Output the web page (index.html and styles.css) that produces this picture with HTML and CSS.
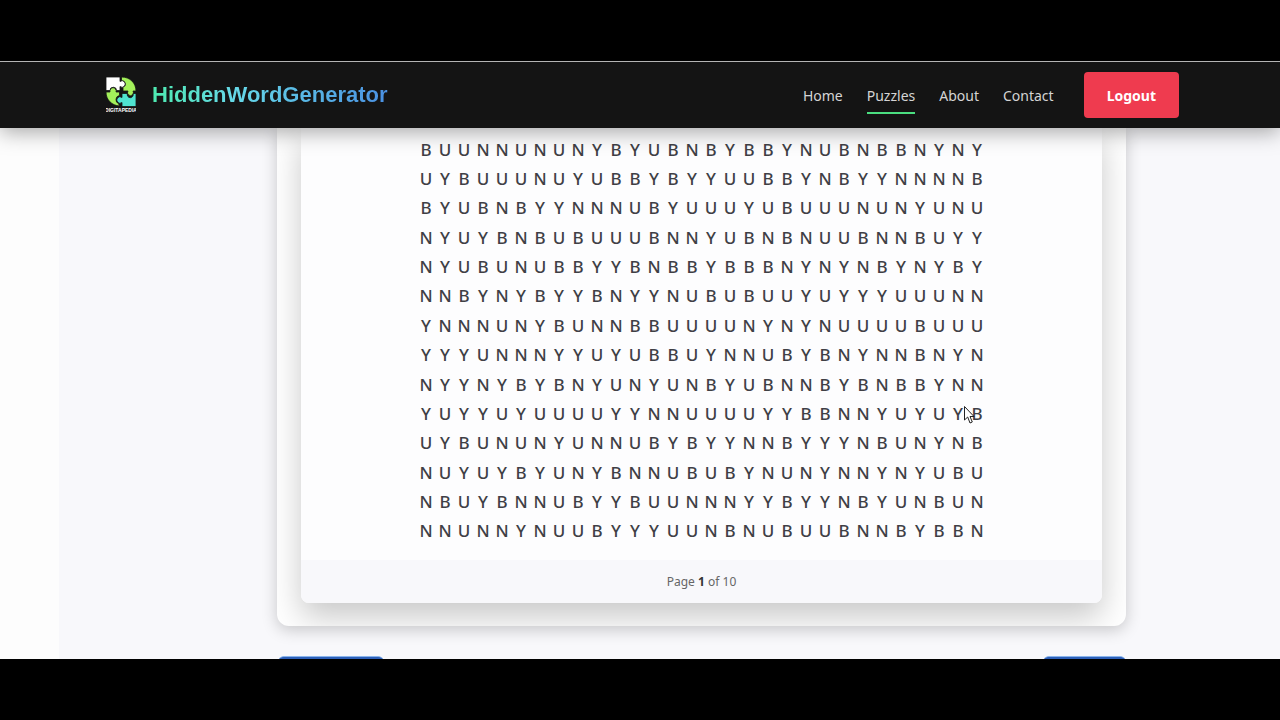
FILE: index.html
```html
<!DOCTYPE html>
<html lang="en">
<head>
  <meta charset="UTF-8">
  <meta name="viewport" content="width=device-width, initial-scale=1.0">
  <title>HiddenWordGenerator</title>
  <link rel="stylesheet" href="styles.css">
</head>
<body>
  <div class="screen">
    <!-- Navbar -->
    <header class="navbar">
      <a href="#" class="brand">
        <svg class="brand-logo" viewBox="0 0 30 36" aria-hidden="true">
          <g stroke="#141414" stroke-width=".8">
            <path fill="#a3f05a" d="M15.500 0C24 0 30 6 30 14H27A3 3 0 1 1 22 14H17V10A3 3 0 1 0 15.500 4Z"/>
            <path fill="#4fe3cf" d="M16 16.500H21.500A3 3 0 1 0 27 16.500H30V29.500H16V25.500A3.200 3.200 0 1 1 16 20.500Z"/>
            <path fill="#a3f05a" d="M0 15H4A3.200 3.200 0 1 1 10 15H13.500V18.500A4.200 4.200 0 0 0 12.500 26.500L13.500 29C6 28.500 0 23 0 15Z"/>
            <path fill="#fff" d="M0 0H14V4.500A3.200 3.200 0 1 1 14 9.500V13.500H10.500A3.200 3.200 0 0 0 4 13.500H0Z"/>
          </g>
          <text x="15" y="34.500" text-anchor="middle" class="logo-text">DIGITAPEDIA</text>
        </svg>
        <span class="brand-name">HiddenWordGenerator</span>
      </a>
      <nav class="nav-links">
        <a href="#">Home</a>
        <a href="#" class="active">Puzzles</a>
        <a href="#">About</a>
        <a href="#">Contact</a>
        <button type="button" class="logout">Logout</button>
      </nav>
    </header>

    <div class="page">
      <aside class="side-panel"></aside>
      <main class="content">
        <div class="viewer">
          <section class="puzzle">
            <div class="board">
              <div class="letters" id="letters">
                <svg class="pointer" viewBox="0 0 12 18" aria-hidden="true">
                  <path fill="#fff" stroke="#222" d="M.5.500V14L3.700 11 6 17 8.300 16 6 10.500H10Z"/>
                </svg>
              </div>
            </div>
            <p class="page-info">Page <strong>1</strong> of 10</p>
          </section>
        </div>
        <div class="pager">
          <button type="button" class="pager-btn previous" aria-label="Previous page"></button>
          <button type="button" class="pager-btn" aria-label="Next page"></button>
        </div>
      </main>
    </div>
  </div>

  <script>
    const rows = [
      "BUUNNUNUNYBYUBNBYBBYNUBNBBNYNY",
      "UYBUUUNUYUBBYBYYUUBBYNBYYNNNNB",
      "BYUBNBYYNNNUBYUUUYUBUUUNUNYUNU",
      "NYUYBNBUBUUUBNNYUBNBNUUBNNBUYY",
      "NYUBUNUBBYYBNBBYBBBNYNYNBYNYBY",
      "NNBYNYBYYBNYYNUBUBUUYUYYYUUUNN",
      "YNNNUNYBUNNBBUUUUNYNYNUUUUBUUU",
      "YYYUNNNYYUYUBBUYNNUBYBNYNNBNYN",
      "NYYNYBYBNYUNYUNBYUBNNBYBNBBYNN",
      "YUYYUYUUUUYYNNUUUUYYBBNNYUYUYB",
      "UYBUNUNYUNNUBYBYYNNBYYYNBUNYNB",
      "NUYUYBYUNYBNNUBUBYNUNYNNYNYUBU",
      "NBUYBNNUBYYBUUNNNYYBYYNBYUNBUN",
      "NNUNNYNUUBYYYUUNBNUBUUBNNBYBBN"
    ];

    const letters = document.getElementById("letters");
    rows.forEach(row => {
      for (const letter of row) {
        const cell = document.createElement("span");
        cell.textContent = letter;
        letters.appendChild(cell);
      }
    });
  </script>
</body>
</html>
```
FILE: styles.css
```css
* {
  box-sizing: border-box;
}
body {
  margin: 0;
  padding: 61px 0;
  background-color: #000;
  font-family: "Noto Sans", sans-serif;
}
.screen {
  display: flex;
  flex-direction: column;
  height: calc(100vh - 122px);
  overflow: hidden;
  background-color: #f8f8fb;
}

/* Navbar */
.navbar {
  display: flex;
  align-items: center;
  justify-content: space-between;
  flex-shrink: 0;
  height: 67px;
  padding: 0 101px 0 106px;
  border-top: 1px solid #b4b4b4;
  background-color: #141414;
  box-shadow: 0 4px 20px rgba(0, 0, 0, 0.35);
  position: relative;
  z-index: 2;
}
.brand {
  display: flex;
  align-items: center;
  gap: 16px;
  text-decoration: none;
}
.brand-logo {
  width: 30px;
  height: 36px;
}
.logo-text {
  font: bold 5px "Liberation Sans", sans-serif;
  fill: #fff;
}
.brand-name {
  font: bold 22px "Liberation Sans", Arial, sans-serif;
  background: linear-gradient(90deg, #4eeab0, #66d9e8 35%, #4a90e2);
  background-clip: text;
  -webkit-background-clip: text;
  color: transparent;
}
.nav-links {
  display: flex;
  align-items: center;
  gap: 24px;
}
.nav-links a {
  padding: 10px 0 6px;
  border-bottom: 2px solid transparent;
  color: #d4d4d4;
  font-size: 14px;
  line-height: 20px;
  text-decoration: none;
}
.nav-links a.active {
  border-bottom-color: #4ade80;
}
.logout {
  height: 46px;
  margin-left: 6px;
  padding: 0 23px;
  border: none;
  border-radius: 4px;
  background-color: #ef3b4f;
  color: #fff;
  font-family: inherit;
  font-size: 14px;
  font-weight: bold;
  cursor: pointer;
}

/* Puzzle viewer */
.page {
  display: flex;
  flex: 1;
}
.side-panel {
  width: 59px;
  background-color: #fdfdfd;
}
.content {
  flex: 1;
  padding: 0 154px 0 218px;
}
.viewer {
  padding: 0 24px 23px;
  border-radius: 0 0 12px 12px;
  background-color: #fff;
  box-shadow: 0 4px 16px rgba(0, 0, 0, 0.2);
  overflow: hidden;
}
.puzzle {
  border-radius: 0 0 8px 8px;
  background-color: #fdfdfe;
  box-shadow: 0 14px 32px rgba(0, 0, 0, 0.22);
}
.board {
  display: flex;
  justify-content: center;
  padding: 7px 0 14px;
}
.letters {
  display: grid;
  grid-template-columns: repeat(30, 19px);
  grid-template-rows: repeat(14, 1fr);
  place-items: center;
  height: 411px;
  color: #3f4045;
  font-size: 17px;
  font-weight: 500;
  line-height: 24px;
  position: relative;
}
.pointer {
  position: absolute;
  top: 271px;
  left: 547px;
  width: 12px;
  height: 18px;
}
.page-info {
  margin: 0;
  padding: 12px 0 11px;
  border-radius: 0 0 8px 8px;
  background-color: #f8f8fb;
  color: #666;
  font-size: 12px;
  line-height: 20px;
  text-align: center;
}
.page-info strong {
  color: #333;
}

/* Pager */
.pager {
  display: flex;
  justify-content: space-between;
  padding: 30px 0 0 1px;
}
.pager-btn {
  width: 83px;
  height: 40px;
  border: none;
  border-top: 1px solid #8ab4ec;
  border-radius: 6px;
  background-color: #2c5fb8;
  cursor: pointer;
}
.pager-btn.previous {
  width: 106px;
}
```
